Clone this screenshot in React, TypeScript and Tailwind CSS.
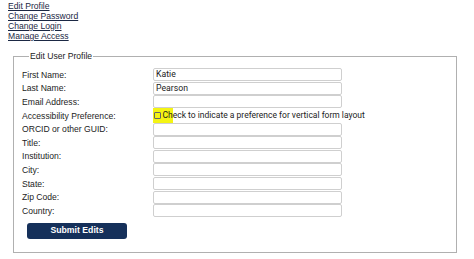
import React, { useState } from 'react';

const fields = [
  { name: 'firstName', label: 'First Name:', value: 'Katie' },
  { name: 'lastName', label: 'Last Name:', value: 'Pearson' },
  { name: 'email', label: 'Email Address:', value: '' },
  { name: 'access', label: 'Accessibility Preference:', value: '' },
  { name: 'orcid', label: 'ORCID or other GUID:', value: '' },
  { name: 'title', label: 'Title:', value: '' },
  { name: 'institution', label: 'Institution:', value: '' },
  { name: 'city', label: 'City:', value: '' },
  { name: 'state', label: 'State:', value: '' },
  { name: 'zip', label: 'Zip Code:', value: '' },
  { name: 'country', label: 'Country:', value: '' },
];

const links = ['Edit Profile', 'Change Password', 'Change Login', 'Manage Access'];

const App = () => {
  const [form, setForm] = useState<Record<string, string>>(
    Object.fromEntries(fields.map((f) => [f.name, f.value]))
  );
  const [vertical, setVertical] = useState(false);

  const handleChange = (e: React.ChangeEvent<HTMLInputElement>) => {
    const { name, value } = e.target;
    setForm((prev) => ({ ...prev, [name]: value }));
  };

  return (
    <div className="w-[474px] h-[259px] bg-white pl-[8px] pt-[1px] text-[8.6px] text-[#1c1c1c] font-['Liberation_Sans',Arial,sans-serif]">
      <div className="flex flex-col leading-[10px]">
        {links.map((l) => (
          <a key={l} href="#" className="w-fit text-[#1b2844] underline">
            {l}
          </a>
        ))}
      </div>
      <form onSubmit={(e) => e.preventDefault()}>
        <fieldset className="mt-[10px] ml-[5px] w-[444px] border border-[#b0b0b0] pl-[8px] pt-[7px] pb-[13px]">
          <legend className="ml-[7px] leading-[10px] px-[1px]">Edit User Profile</legend>
          <div className="flex flex-col">
            {fields.map((f) => (
              <div key={f.name} className="flex items-center h-[13.6px]">
                <label className="w-[131px] leading-[10px]">{f.label}</label>
                {f.name === 'access' ? (
                  <div className="flex items-center font-['Roboto',sans-serif] text-[8.5px]">
                    <span className="flex items-center bg-[#f4f414] pl-[1px] py-[1.5px]">
                      <input
                        type="checkbox"
                        checked={vertical}
                        onChange={() => setVertical(!vertical)}
                        className="appearance-none w-[7px] h-[7px] border border-[#666] rounded-[1px] bg-transparent mr-[1.5px]"
                      />
                      Ch
                    </span>
                    <span>eck to indicate a preference for vertical form layout</span>
                  </div>
                ) : (
                  <input
                    name={f.name}
                    value={form[f.name]}
                    onChange={handleChange}
                    className="w-[189px] h-[13px] border border-[#cfcfcf] rounded-[2px] px-[2px] font-['Roboto',sans-serif] text-[8.7px] text-[#222] outline-none"
                  />
                )}
              </div>
            ))}
          </div>
          <button
            type="submit"
            className="mt-[5px] ml-[5px] w-[100px] h-[16px] rounded-[3px] bg-[#15305a] text-white font-bold text-[8.7px]"
          >
            Submit Edits
          </button>
        </fieldset>
      </form>
    </div>
  );
};

export default App;
